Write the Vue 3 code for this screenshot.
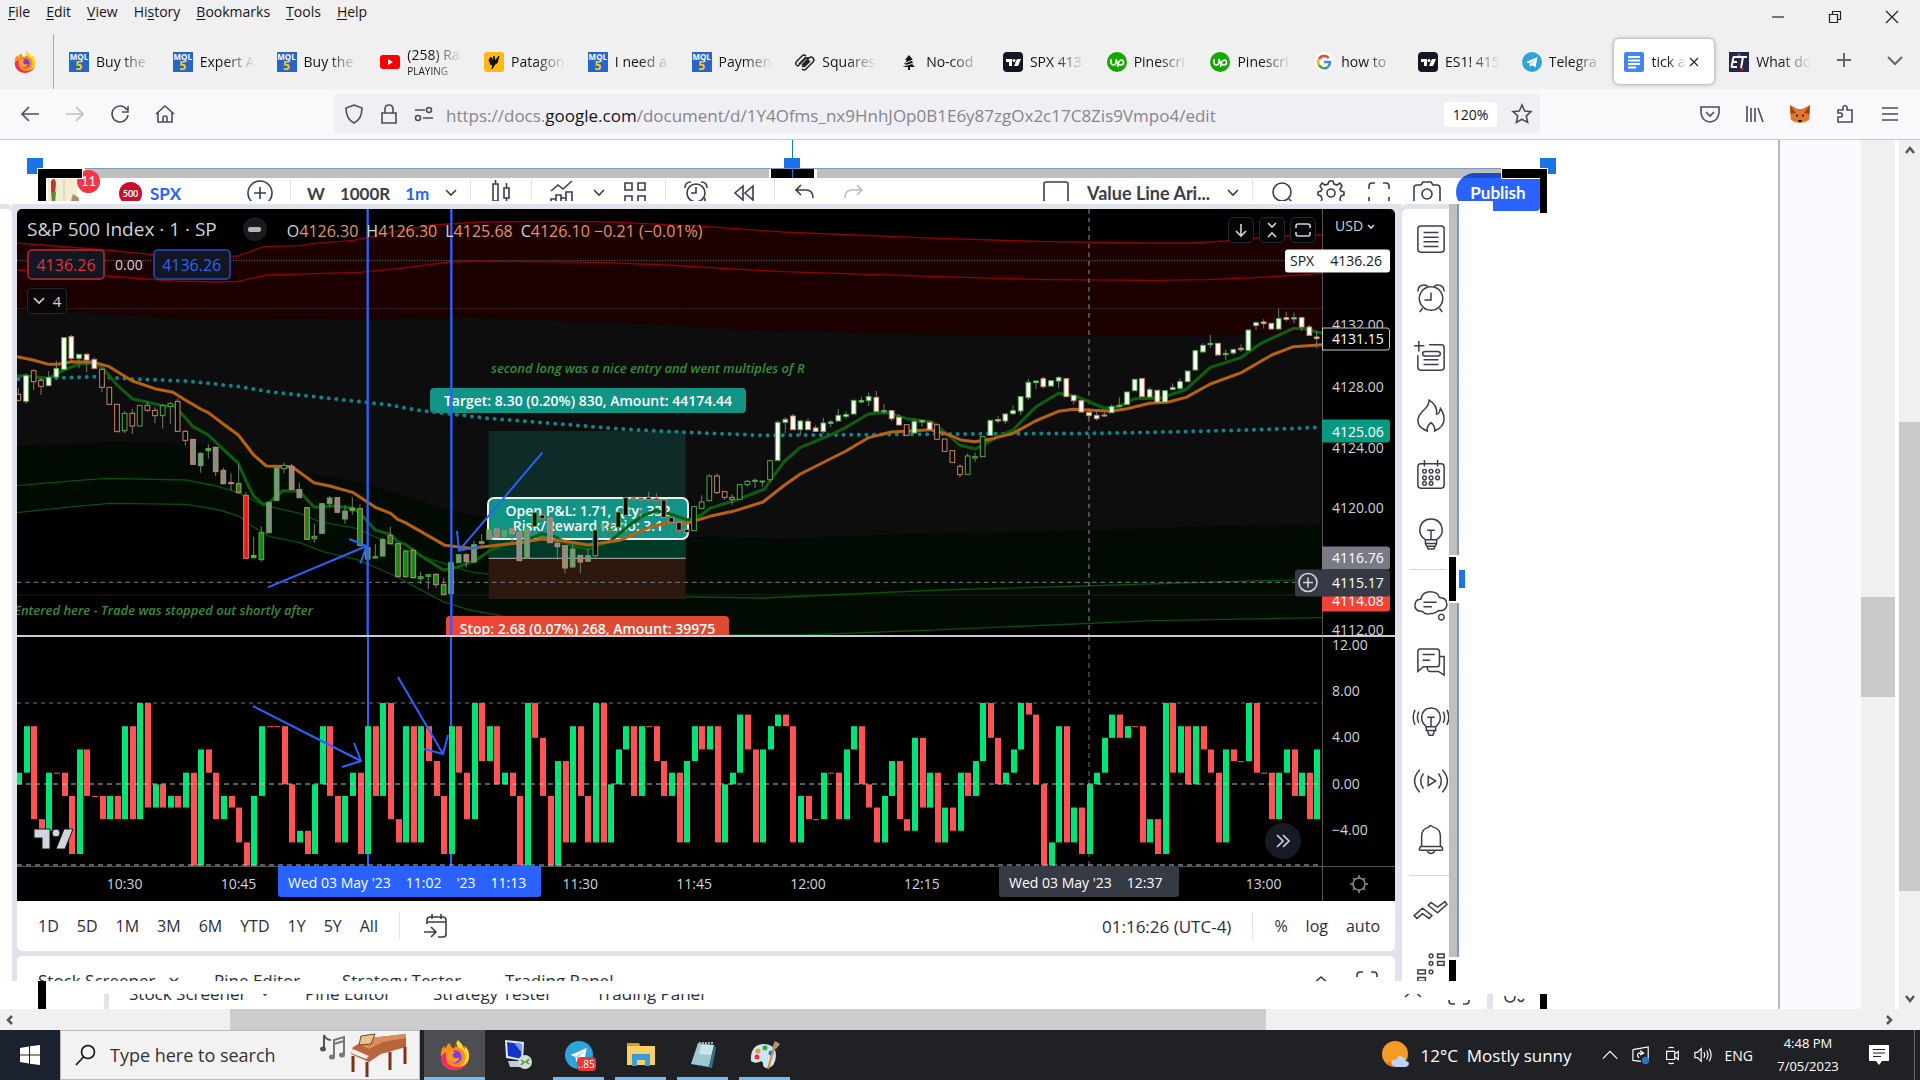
<template>
  <div class="desktop">
    <header class="browser">
      <div class="menu-row">
        <nav class="menu">
          <button v-for="m in menus" :key="m.join('')"><span>{{ m[0] }}<u>{{ m[1] }}</u>{{ m[2] }}</span></button>
        </nav>
        <div class="window-buttons">
          <button aria-label="Minimize"><svg width="12" height="12"><path d="M0 6h12" /></svg></button>
          <button aria-label="Restore"><svg width="12" height="12"><path d="M.5 3.5h8v8h-8zM3.500 3V.5h8v8H9" /></svg></button>
          <button aria-label="Close"><svg width="14" height="12"><path d="M1 0l12 12M13 0L1 12" /></svg></button>
        </div>
      </div>

      <div class="tab-row">
        <div class="firefox-view">
          <svg width="22" height="22" viewBox="0 0 32 32"><use href="#firefox" /></svg>
        </div>
        <div v-for="(tab, i) in tabs" :key="i" class="tab" :class="{ active: tab.active }">
          <span class="favicon" :class="{ mql: tab.kind === 'mql' }">
            <template v-if="tab.kind === 'mql'"><b>MQL</b><i>5</i></template>
            <svg v-else-if="tab.kind === 'youtube'" viewBox="0 0 20 20"><rect y="3" width="20" height="14" rx="3" fill="#f00" /><path d="M8 7l5 3-5 3z" fill="#fff" /></svg>
            <svg v-else-if="tab.kind === 'sbs'" viewBox="0 0 20 20"><rect width="20" height="20" rx="3" fill="#fdb913" /><path d="M5 8l2-3 1 5 2-6 1 5 4-5-2 7-2 1-3 5 1-5-2 1z" fill="#111" stroke="#111" /></svg>
            <svg v-else-if="tab.kind === 'squarespace'" viewBox="0 0 20 20"><path d="M1 10l6-6q2-2 4 0M4 12l7-7M7 17q2 2 4 0l7-7q2-2 0-4t-4 0l-7 7M14 8l-7 7M9 15l6-6M1 10q-1 3 2 4l7-7q2-2 4-1" fill="none" stroke="#222" stroke-width="1.500" /></svg>
            <svg v-else-if="tab.kind === 'tree'" viewBox="0 0 20 20"><path d="M10 3l4 5h-2l3 4h-2l3 3h-5v3H9v-3H4l3-3H5l3-4H6z" fill="#111" /><path d="M6 11l8-3M5 14l10-3" stroke="#eee" /></svg>
            <svg v-else-if="tab.kind === 'tradingview'" viewBox="0 0 20 20"><rect width="20" height="20" rx="4" fill="#131722" /><path d="M3 7h6v7H6v-4H3zM14 7h4l-3 7h-4z" fill="#fff" /><circle cx="11" cy="8.500" r="1.500" fill="#fff" /></svg>
            <svg v-else-if="tab.kind === 'upwork'" viewBox="0 0 20 20"><circle cx="10" cy="10" r="10" fill="#14a800" /><path d="M4 7v3q0 3 2.500 3T9 10V7q1 4 3 5M10.500 15q1-7 4-7 2 0 2 2.500t-2.500 2.500q-2 0-3-1.500" fill="none" stroke="#fff" stroke-width="1.600" /></svg>
            <svg v-else-if="tab.kind === 'google'" viewBox="0 0 20 20"><circle cx="10" cy="10" r="10" fill="#fff" /><path d="M14.700 6A6 6 0 0 0 5 7" fill="none" stroke="#ea4335" stroke-width="2.500" /><path d="M5 7a6 6 0 0 0 0 6" fill="none" stroke="#fbbc05" stroke-width="2.500" /><path d="M5 13a6 6 0 0 0 9 2" fill="none" stroke="#34a853" stroke-width="2.500" /><path d="M10 10h6q0 3-2 5" fill="none" stroke="#4285f4" stroke-width="2.500" /></svg>
            <svg v-else-if="tab.kind === 'telegram'" viewBox="0 0 20 20"><use href="#telegram" /></svg>
            <svg v-else-if="tab.kind === 'docs'" viewBox="0 0 20 20"><rect width="20" height="20" rx="2" fill="#4285f4" /><path d="M4 5h12M4 8.500h12M4 12h12M4 15.500h8" stroke="#fff" stroke-width="2" /></svg>
            <svg v-else viewBox="0 0 20 20"><rect width="20" height="20" fill="#23284a" /><path d="M4 5h6M3 10h5M2 15h6M4.500 5l-2 10M10 5h8M14 5l-2 11" stroke="#fff" stroke-width="2" /><path d="M11 16h4l-2 3z" fill="#d22" /><path d="M8 4h4l-2-3z" fill="#2a7fd0" /></svg>
          </span>
          <span class="tab-title">{{ tab.title }}<small v-if="tab.note">{{ tab.note }}</small></span>
          <button v-if="tab.active" class="tab-close" aria-label="Close tab"><svg width="10" height="10"><path d="M1 1l8 8M9 1L1 9" /></svg></button>
        </div>
        <div class="tab-tools">
          <button aria-label="New tab"><svg width="16" height="16"><path d="M8 1v14M1 8h14" /></svg></button>
          <button aria-label="List all tabs"><svg width="16" height="16"><path d="M1 5l7 7 7-7" /></svg></button>
        </div>
      </div>

      <div class="nav-row">
        <div class="nav-buttons">
          <button aria-label="Back"><svg class="line"><path d="M19 10H2M9 3l-7 7 7 7" /></svg></button>
          <button aria-label="Forward" class="dim"><svg class="line"><path d="M1 10h17M11 3l7 7-7 7" /></svg></button>
          <button aria-label="Reload"><svg class="line"><path d="M17 6a8 8 0 1 0 1 5M18 2v6h-6" /></svg></button>
          <button aria-label="Home"><svg class="line"><path d="M1 10l9-8 9 8M3 8.500V18h14V8.500M8 18v-5q2-2 4 0v5" /></svg></button>
        </div>
        <div class="url-bar">
          <svg class="line"><path d="M10 1l8 3c0 7-2 12-8 15C4 16 2 11 2 4z" /></svg>
          <svg class="line"><path d="M3 9h14v10H3zM6 9V5q0-4 4-4t4 4v4" /></svg>
          <svg class="line"><path d="M1 6h10M9 14h10" /><circle cx="15" cy="6" r="2.500" /><circle cx="4" cy="14" r="2.500" /></svg>
          <div class="address">https://docs.<b>google.com</b>/document/d/1Y4Ofms_nx9HnhJOp0B1E6y87zgOx2c17C8Zis9Vmpo4/edit</div>
          <button class="zoom">120%</button>
          <svg class="line"><path d="M10 1l2.700 6 6.300.6-4.700 4.300 1.300 6.600-5.600-3.300-5.600 3.300 1.300-6.600L1 7.600 7.300 7z" /></svg>
        </div>
        <div class="nav-right">
          <svg class="line"><path d="M1 3h18v6q-1 8-9 9Q2 17 1 9zM6 8l4 4 4-4" /></svg>
          <svg class="line"><path d="M2 2v16M6 4v14M10 4v14M13 4l5 14" /></svg>
          <svg width="20" height="20" viewBox="0 0 20 20"><path d="M0 1l8 4h4l8-4v7l-1 8-4 2-5 1-5-1-4-2-1-8z" fill="#e8752b" /><path d="M0 1l6 8-5 1zM20 1l-6 8 5 1z" fill="#8c4a20" /><path d="M6 10l3 2-3 1zM14 10l-3 2 3 1z" fill="#233447" /><path d="M8 16h4l-1 2H9z" fill="#111" /></svg>
          <svg class="line"><path d="M3 6h5V3q2-3 4 0v3h5v12H3v-5h3q3-2 0-4H3z" /></svg>
          <svg class="line"><path d="M2 4h16M2 10h16M2 16h16" /></svg>
        </div>
      </div>
    </header>

    <main class="viewport">
      <div class="document">
        <div class="shot-top">
          <span class="handle nw"></span>
          <span class="handle n"></span>
          <span class="handle ne"></span>
          <div class="selection-edge"></div>
          <span class="crop nw"></span>
          <span class="crop n"></span>
          <span class="crop ne"></span>
          <div class="tv-toolbar">
            <svg class="avatar" width="34" height="30" viewBox="0 0 34 30"><rect x="2" width="29" height="30" fill="#f3ecd2" /><path d="M5 3q4-5 5 3l-1 9H5z" fill="#c0392b" /><path d="M5 14h5l-1 12H6z" fill="#5c8a3a" /><path d="M18 0v30" stroke="#cfc6a4" /><path d="M24 26l3-10 6 4v8z" fill="#b08a78" /></svg>
            <span class="count">11</span>
            <span class="logo500">500</span>
            <b class="symbol">SPX</b>
            <svg class="ico"><circle cx="14" cy="14" r="12" /><path d="M14 8v12M8 14h12" /></svg>
            <i class="sep"></i>
            <b class="interval">W</b>
            <b class="interval">1000R</b>
            <b class="interval on">1m</b>
            <svg class="chev"><path d="M1 3l5 5 5-5" /></svg>
            <i class="sep"></i>
            <svg class="ico"><path d="M6 5h5v17H6zM8.500 1v4M8.500 22v4M17 9h5v10h-5zM19.500 4v5M19.500 19v6" /></svg>
            <i class="sep"></i>
            <svg class="ico"><path d="M3 12l7-6 5 4 9-8M3 26v-6h5v-4h5v3h5v-6h6v13zM8 20v6M13 19v7M18 19v7" /></svg>
            <svg class="chev"><path d="M1 3l5 5 5-5" /></svg>
            <svg class="ico"><path d="M4 4h7v7H4zM17 4h7v7h-7zM4 17h7v7H4zM17 17h7v7h-7z" /></svg>
            <i class="sep"></i>
            <svg class="ico"><circle cx="14" cy="14" r="9" /><path d="M14 8v6H9M3 9q0-6 6-6M25 9q0-6-6-6M19 23h8M23 19v8" /></svg>
            <svg class="ico"><path d="M13 7l-8 7 8 7zM23 7l-8 7 8 7z" /></svg>
            <i class="sep"></i>
            <svg class="ico"><path d="M10 6l-5 5 5 5M5 11h10q7 0 7 8" /></svg>
            <svg class="ico dim"><path d="M18 6l5 5-5 5M23 11H13q-7 0-7 8" /></svg>
            <span class="grow"></span>
            <svg class="ico"><rect x="2" y="3" width="24" height="24" rx="2" /></svg>
            <b class="layout">Value Line Ari...</b>
            <svg class="chev"><path d="M1 3l5 5 5-5" /></svg>
            <i class="sep"></i>
            <svg class="ico"><circle cx="13" cy="13" r="9" /><path d="M20 20l5 5" /></svg>
            <svg class="ico"><circle cx="14" cy="14" r="4" /><path d="M12 2h4l1 3 3 1 3-2 2 3-2 3 1 2 3 1v3l-3 1-1 3 1 3-3 2-3-2-3 1-1 3M12 2l-1 3-3 1-3-2-2 3 2 3-1 2-3 1v3l3 1 1 3-1 3 3 2 3-2" /></svg>
            <svg class="ico"><path d="M4 10V7q0-3 3-3h3M18 4h3q3 0 3 3v3M4 18v3q0 3 3 3h3M18 24h3q3 0 3-3v-3" /></svg>
            <svg class="ico"><path d="M1 9q0-3 3-3h4l2-3h8l2 3h4q3 0 3 3v16H1z" /><circle cx="14" cy="15" r="5" /></svg>
            <button class="publish">Publish</button>
          </div>
        </div>

        <div class="tv">
          <aside class="left-rail"></aside>

          <section class="center">
            <div class="chart">
              <div class="pane price-pane">
                <svg class="layer" viewBox="52 27 3915 1278" preserveAspectRatio="none">
                  <path :d="redArea" fill="#1c0000" />
                  <path :d="greyArea" fill="#0d0d0d" />
                  <path :d="greenArea" fill="#020b02" />
                  <path d="M52 182H3967" stroke="#777" stroke-width="3" stroke-dasharray="3 5" />
                  <path d="M52 326H3967M52 1185H3967" stroke="#444" stroke-width="3" stroke-dasharray="3 5" />
                  <path :d="line(redUpper)" class="band red" />
                  <path :d="line(redLower)" class="band red" />
                  <path :d="line(greenInner)" class="band green" />
                  <path :d="line(greenOuter)" class="band green" />
                  <rect x="1467" y="693" width="591" height="382" fill="#0f9a8a" opacity=".22" />
                  <rect x="1467" y="1010" width="591" height="65" fill="#00402c" opacity=".8" />
                  <rect x="1467" y="1075" width="591" height="122" fill="#2d180d" />
                  <path d="M1467 1075h591" stroke="#999" stroke-width="4" />
                </svg>
                <div class="tag target">Target: 8.30 (0.20%) 830, Amount: 44174.44</div>
                <div class="tag pnl">Open P&amp;L: 1.71, Qty: 332<br>Risk/Reward Ratio: 3.1</div>
                <div class="tag stop">Stop: 2.68 (0.07%) 268, Amount: 39975</div>
                <svg class="layer" viewBox="52 27 3915 1278" preserveAspectRatio="none">
                  <path d="M52 1147H3967" stroke="#7b7e87" stroke-width="3" stroke-dasharray="14 11" />
                  <path d="M3268 27V1305" stroke="#6e7179" stroke-width="4" stroke-dasharray="14 12" />
                  <path :d="line(mean)" class="mean" />
                  <path :d="line(fast)" class="fast" />
                  <path :d="line(slow)" class="slow" />
                  <g v-for="(c, i) in candles" :key="i">
                    <path :d="`M${c.x} ${c.high}V${c.low}`" stroke="#777" stroke-width="3" />
                    <rect :x="c.x - 7" :y="c.top" width="14" :height="c.height" :fill="c.fill" :stroke="c.edge" stroke-width="3" />
                  </g>
                  <path d="M1104 27V1305M1355 27V1305" class="event" />
                  <path d="M805 1162L1101 1038M1049 1017L1101 1038 1082 1090M1628 758L1378 1052M1372 993L1378 1052 1440 1040" class="arrow" />
                </svg>
                <p class="note first">Entered here - Trade was stopped out shortly after</p>
                <p class="note second">second long was a nice entry and went multiples of R</p>
                <div class="legend">
                  <div class="legend-title"><span>S&amp;P 500 Index · 1 · SP</span><i class="minus"></i>
                    <div class="ohlc">
                      <span>O<b>4126.30</b></span><span>H<b>4126.30</b></span><span>L<b>4125.68</b></span><span>C<b>4126.10 −0.21 (−0.01%)</b></span>
                    </div>
                  </div>
                  <div class="quotes"><button class="sell">4136.26</button><span>0.00</span><button class="buy">4136.26</button></div>
                  <button class="fold"><svg width="12" height="8"><path d="M1 1l5 5 5-5" /></svg>4</button>
                </div>
                <div class="pane-buttons">
                  <button aria-label="Move pane down"><svg width="16" height="16"><path d="M8 2v12M3 9l5 5 5-5" /></svg></button>
                  <button aria-label="Collapse pane"><svg width="16" height="16"><path d="M4 1l4 4 4-4M4 15l4-4 4 4" /></svg></button>
                  <button aria-label="Maximize pane"><svg width="16" height="16"><path d="M1 6V4q0-2 2-2h10q2 0 2 2v2M1 10v2q0 2 2 2h10q2 0 2-2v-2" /></svg></button>
                </div>
              </div>
              <div class="axis price-axis">
                <span class="currency">USD<svg width="8" height="6"><path d="M1 1l3 3 3-3" /></svg></span>
                <span v-for="p in priceTicks" :key="p.text" class="tick" :style="{ top: p.y + '%' }">{{ p.text }}</span>
                <span v-for="p in priceTags" :key="p.text" class="tick boxed" :class="p.kind" :style="{ top: p.y + '%' }">
                  <em v-if="p.kind === 'last'">SPX</em>
                  <svg v-if="p.kind === 'cross'" width="20" height="20"><circle cx="10" cy="10" r="9" /><path d="M10 5v10M5 10h10" /></svg>
                  {{ p.text }}
                </span>
              </div>

              <div class="pane">
                <svg class="layer" viewBox="0 1 1305 229" preserveAspectRatio="none">
                  <path d="M1072 0V231" stroke="#6e7179" stroke-dasharray="5 4" />
                  <path d="M0 67H1305" stroke="#777" stroke-dasharray="4 4" />
                  <path d="M351 0V231M434 0V231" class="event thin" />
                  <rect v-for="(b, i) in bars" :key="i" :x="b.x" :y="b.y" width="6" :height="b.h" :fill="b.color" />
                  <path d="M0 148H1305M0 229H1305" stroke="#bbb" stroke-dasharray="5 4" />
                  <path d="M236 70L344 125M337 107L344 125 325 131M381 41L426 118M431 99L426 118 407 113" class="arrow thin" />
                </svg>
                <svg class="tv-mark" width="42" height="24" viewBox="0 0 42 24"><path d="M2 2h16v20h-8V11H2zM32 2h9l-8 20h-9z" /><circle cx="24" cy="6" r="4" /></svg>
                <button class="to-end" aria-label="Scroll to the last bar"><svg width="16" height="16"><path d="M2 2l6 6-6 6M8 2l6 6-6 6" /></svg></button>
              </div>
              <div class="axis">
                <span v-for="p in oscTicks" :key="p.text" class="tick" :style="{ top: p.y + '%' }">{{ p.text }}</span>
              </div>

              <div class="time-axis">
                <span v-for="t in timeTicks" :key="t.text" class="time" :style="{ left: t.x + '%' }">{{ t.text }}</span>
                <div class="time-tag blue"><span>Wed 03 May '23</span><span>11:02</span><span>'23</span><span>11:13</span></div>
                <div class="time-tag grey"><span>Wed 03 May '23</span><span>12:37</span></div>
              </div>
              <div class="axis-corner">
                <svg width="20" height="20"><circle cx="10" cy="10" r="6" /><path d="M10 1v3M10 16v3M1 10h3M16 10h3M4 4l2 2M14 14l2 2M16 4l-2 2M6 14l-2 2" /></svg>
              </div>
            </div>

            <div class="range-bar">
              <button v-for="r in ranges" :key="r">{{ r }}</button>
              <i class="sep"></i>
              <svg class="ico"><path d="M6 12V8q0-3 3-3h13q3 0 3 3v14q0 3-3 3h-5M6 10h19M11 2v5M20 2v5M3 20h11M10 15l5 5-5 5" /></svg>
              <span class="grow"></span>
              <span class="clock">01:16:26 (UTC-4)</span>
              <i class="sep"></i>
              <button>%</button>
              <button>log</button>
              <button>auto</button>
            </div>

            <div class="bottom-tabs">
              <span class="dropdown">Stock Screener<svg class="chev"><path d="M2 3l4 4 4-4" /></svg></span>
              <span class="pine">Pine Editor</span>
              <span class="strategy">Strategy Tester</span>
              <span>Trading Panel</span>
              <span class="grow"></span>
              <svg class="ico"><path d="M6 15l8-7 8 7" /></svg>
              <svg class="ico"><path d="M4 8V6q0-3 3-3h3M18 3h3q3 0 3 3v2" /></svg>
            </div>
          </section>

          <aside class="right-rail">
            <button v-for="s in railTop" :key="s.name" :aria-label="s.name"><svg class="rail-ico" viewBox="0 0 32 32"><path :d="s.d" /></svg></button>
            <i class="rule"></i>
            <button v-for="s in railMid" :key="s.name" :aria-label="s.name"><svg class="rail-ico" viewBox="0 0 32 32"><path :d="s.d" /></svg></button>
            <i class="rule"></i>
            <button v-for="s in railEnd" :key="s.name" :aria-label="s.name"><svg class="rail-ico" viewBox="0 0 32 32"><path :d="s.d" /></svg></button>
          </aside>
          <div class="right-edge">
            <span class="crop side"></span>
            <span class="handle side"></span>
            <span class="crop foot"></span>
          </div>
        </div>

        <div class="shot-bottom">
          <div class="bottom-tabs ghost">
            <span class="dropdown">Stock Screener<svg class="chev"><path d="M2 3l4 4 4-4" /></svg></span>
            <span class="pine">Pine Editor</span>
            <span class="strategy">Strategy Tester</span>
            <span>Trading Panel</span>
            <span class="grow"></span>
            <svg class="ico"><path d="M6 15l8-7 8 7" /></svg>
            <svg class="ico"><path d="M4 18v1q0 3 3 3h3M18 22h3q3 0 3-3v-1" /></svg>
          </div>
          <div class="ghost-rail"><svg width="24" height="10"><path d="M2 -4q0 6 5 6t5-6M15 -1q3 5 6 0" /></svg></div>
        </div>
      </div>

      <div class="page-gutter"></div>
      <div class="scroll inner"><span></span></div>
      <div class="scroll outer">
        <svg width="12" height="10"><path d="M2 8l4-5 4 5" /></svg>
        <span></span>
        <svg width="12" height="10"><path d="M2 2l4 5 4-5" /></svg>
      </div>
    </main>

    <div class="scroll-x">
      <svg width="10" height="12"><path d="M7 2L3 6l4 4" /></svg>
      <div class="track"><span></span></div>
      <svg width="10" height="12"><path d="M3 2l4 4-4 4" /></svg>
    </div>

    <footer class="taskbar">
      <button class="start" aria-label="Start"><svg width="20" height="20"><path d="M0 3l9-1.500V9.500H0zM10 1.300L20 0v9.500H10zM0 10.500h9v8L0 17zM10 10.500h10V20l-10-1.300z" fill="#fff" /></svg></button>
      <label class="search-box">
        <svg width="22" height="22"><circle cx="13" cy="8" r="6.500" /><path d="M8.500 13L1 21" /></svg>
        <input type="text" placeholder="Type here to search">
        <svg width="92" height="46" viewBox="0 0 92 46">
          <path d="M5 17V3q2 5 7 5" fill="none" stroke="#555" stroke-width="2" /><ellipse cx="4" cy="17" rx="3" ry="2.500" fill="#555" />
          <path d="M15 24V8l10-3v17M15 12l10-3" fill="none" stroke="#777" stroke-width="2" /><ellipse cx="13" cy="25" rx="3" ry="2.500" fill="#777" /><ellipse cx="23" cy="23" rx="3" ry="2.500" fill="#777" />
          <path d="M34 15l16-9 37-4v13L62 22 50 30 32 22z" fill="#b9643c" /><path d="M50 6l37-4v4L64 10 50 17 40 12z" fill="#d98c60" />
          <path d="M34 17l16 7-3 3-15-6z" fill="#eee" /><path d="M42 4l14-2-4 10-12 1z" fill="#e6c48e" stroke="#7b3e20" />
          <path d="M34 24v16M48 30v15M71 20v18M86 15v17" stroke="#7b3216" stroke-width="3" />
        </svg>
      </label>
      <div class="tasks">
        <button class="task focused" aria-label="Firefox"><svg width="30" height="30" viewBox="0 0 32 32"><use href="#firefox" /></svg></button>
        <button class="task" aria-label="Remote Desktop"><svg width="30" height="30"><path d="M3 0l19 2-1 19-17-3z" fill="#dfe7f5" /><path d="M5 2l15 2-1 15-13-3z" fill="#1633c9" /><path d="M12 3l8 1v9z" fill="#6f9bf5" /><path d="M6 21h12v6H8z" fill="#c4cad3" /><circle cx="23" cy="22" r="7" fill="#d9d9d9" /><path d="M19 20l3 2-3 3M27 19l-3 3 3 2" fill="none" stroke="#2a9d3a" stroke-width="1.500" /></svg></button>
        <button class="task running" aria-label="Telegram"><svg width="28" height="28" viewBox="0 0 20 20"><use href="#telegram" /></svg><span class="unread">..85</span></button>
        <button class="task running" aria-label="File Explorer"><svg width="28" height="28"><path d="M0 2h12l2 4H0z" fill="#d99a1c" /><path d="M0 5h28v19H0z" fill="#fbd063" /><path d="M5 25V13h18v12h-5v-6h-8v6z" fill="#3a9be0" /></svg></button>
        <button class="task running" aria-label="Notepad"><svg width="28" height="28"><path d="M9 2l16 2-5 22-18-3z" fill="#9cc9cf" /><path d="M12 4l13 0-3 10-12-1z" fill="#c9e6e8" /><path d="M2 23l18 3 5-22 2 3-4 20z" fill="#3e7078" /><path d="M10 2h14" stroke="#aab" stroke-width="2" stroke-dasharray="2 1" /></svg></button>
        <button class="task running" aria-label="Paint"><svg width="30" height="30"><path d="M13 4q13 0 13 12-1 12-9 12-4 0-4-4t-4-2-8-1Q0 5 13 4z" fill="#cfe4f2" /><circle cx="7" cy="17" r="2.500" fill="#e33" /><circle cx="8" cy="11" r="2.500" fill="#f0962a" /><circle cx="15" cy="8" r="2.500" fill="#3a3" /><circle cx="21" cy="13" r="2.500" fill="#27c" /><path d="M18 29l6-21" stroke="#d78a2e" stroke-width="2" /><path d="M22 8l3-7 5 3-4 5z" fill="#b89468" /></svg></button>
      </div>
      <div class="tray">
        <svg width="30" height="30"><circle cx="14" cy="14" r="13" fill="#f59a22" /><path d="M4 22a13 13 0 0 0 20 0z" fill="#ef7416" /><path d="M13 26q-4-1-2-5 2-2 4-1 2-6 7-3 3 2 2 4 4 0 4 3-1 3-4 3H14z" fill="#b9d4f8" /></svg>
        <span class="weather">12°C&nbsp; Mostly sunny</span>
        <svg class="tray-ico" viewBox="0 0 20 20"><path d="M2 14l8-8 8 8" /></svg>
        <svg class="tray-ico" viewBox="0 0 20 20"><path d="M1 4l17-3v16l-5-1M1 4v12l9 1M13 8H7q-2 3 1 5M9 5l4 3-4 2" /><circle cx="15" cy="16" r="4" fill="#2b72c0" stroke="none" /></svg>
        <svg class="tray-ico" viewBox="0 0 20 20"><path d="M4 6h9v9H4zM13 9l4-3v9l-4-3M6 2q3-1 6 0M6 19q3 1 6 0" /></svg>
        <svg class="tray-ico" viewBox="0 0 20 20"><path d="M1 7h3l4-4v14l-4-4H1zM11 7q2 3 0 6M14 5q3 5 0 10M17 3q4 7 0 14" /></svg>
        <span class="lang">ENG</span>
        <span class="datetime">4:48 PM<br>7/05/2023</span>
        <svg class="notify" width="20" height="20"><path d="M0 0h20v16h-7l-3 4-3-4H0z" fill="#fff" /><path d="M4 4.500h12M4 8h12M4 11.500h8" stroke="#222" /></svg>
        <i class="show-desktop"></i>
      </div>
    </footer>

    <svg class="symbols" width="0" height="0">
      <defs>
        <symbol id="firefox" viewBox="0 0 32 32">
          <path d="M19 0q-3 4-2 7 8 0 11 5 0-4-2-6 6 5 5 13-2 12-15 13Q2 31 1 18 0 10 5 6q0 2 1 3Q8 3 11 4q0 4 4 5 3-4 4-9z" fill="#ff8a1e" />
          <path d="M19 0q-3 5 1 8 7 3 7 10t-7 11q11-2 11-12 0-7-5-11 1 3 0 4-2-6-7-10z" fill="#ffd82e" />
          <path d="M1 18q1 12 15 14 11-1 14-9-5 7-14 6-12-2-9-16-4 1-6 5z" fill="#f5266d" />
          <circle cx="16" cy="18" r="7" fill="#7a3be0" />
          <path d="M7 13q5-3 9 0-4 2-2 5 3 3 7 0-2 7-8 6-7-3-6-11z" fill="#ff9a2a" />
        </symbol>
        <symbol id="telegram" viewBox="0 0 20 20">
          <circle cx="10" cy="10" r="10" fill="#2ea3dc" />
          <path d="M4 10l11.500-5-2 10.500-3.500-2.500-2 2-.5-3.500z" fill="#fff" />
          <path d="M7.500 11.500l6-4.500-4.500 5.500z" fill="#a9d3ea" />
        </symbol>
      </defs>
    </svg>
  </div>
</template>

<script setup>
import { computed } from 'vue'

const menus = [
  ['', 'F', 'ile'], ['', 'E', 'dit'], ['', 'V', 'iew'], ['Hi', 's', 'tory'],
  ['', 'B', 'ookmarks'], ['', 'T', 'ools'], ['', 'H', 'elp']
]

const tabs = [
  { kind: 'mql', title: 'Buy the' },
  { kind: 'mql', title: 'Expert A' },
  { kind: 'mql', title: 'Buy the' },
  { kind: 'youtube', title: '(258) Ra', note: 'PLAYING' },
  { kind: 'sbs', title: 'Patagon' },
  { kind: 'mql', title: 'I need a' },
  { kind: 'mql', title: 'Paymen' },
  { kind: 'squarespace', title: 'Squares' },
  { kind: 'tree', title: 'No-cod' },
  { kind: 'tradingview', title: 'SPX 413' },
  { kind: 'upwork', title: 'Pinescri' },
  { kind: 'upwork', title: 'Pinescri' },
  { kind: 'google', title: 'how to' },
  { kind: 'tradingview', title: 'ES1! 415' },
  { kind: 'telegram', title: 'Telegra' },
  { kind: 'docs', title: 'tick a', active: true },
  { kind: 'et', title: 'What do' }
]

const ranges = ['1D', '5D', '1M', '3M', '6M', 'YTD', '1Y', '5Y', 'All']

const priceTicks = [
  { text: '4132.00', y: 27.2 }, { text: '4128.00', y: 41.7 }, { text: '4124.00', y: 56 },
  { text: '4120.00', y: 70.3 }, { text: '4112.00', y: 98.8 }
]
const priceTags = [
  { text: '4136.26', y: 12.1, kind: 'last' },
  { text: '4131.15', y: 30.4, kind: 'outline' },
  { text: '4125.06', y: 52.2, kind: 'teal' },
  { text: '4116.76', y: 81.9, kind: 'grey' },
  { text: '4114.08', y: 91.8, kind: 'red' },
  { text: '4115.17', y: 87.7, kind: 'cross' }
]
const oscTicks = [
  { text: '12.00', y: 3.5 }, { text: '8.00', y: 23.6 }, { text: '4.00', y: 43.7 },
  { text: '0.00', y: 64.2 }, { text: '−4.00', y: 84.3 }
]

// one bar per minute, the first one is 10:16
const minuteX = (i) => ((4 + 22.78 * i) / 3915) * 100
const timeTicks = [
  ['10:30', 14], ['10:45', 29], ['11:30', 74], ['11:45', 89], ['12:00', 104], ['12:15', 119], ['13:00', 164]
].map(([text, i]) => ({ text, x: minuteX(i) }))

// fill + edge, body top, body bottom, wick top, wick bottom
const candleData = `
ko 583 601 565 605|wg 527 604 520 612|ko 512 545 508 570|ko 541 559 533 585|wg 533 557 513 557|wg 505 531 482 535
wg 413 508|wo 410 475 405 488|wg 463 475 463 505|wo 463 480 460 517|wo 479 505 472 508|ko 508 562 505 577|ko 562 613
ko 613 695|kg 640 692 634 699|ko 640 678 628 702|kg 616 678|ko 616 631 604 636|ko 631 647 622 670|kg 617 647 612 686
kg 611 619 607 672|ko 604 694 595 694|ko 694 721 690 736|so 718 793|sg 760 797 757 818|sg 746 752 733 776
so 742 815 740 828|so 811 851 803 853|so 848 851 820 871|go 851 878 793 881|ro 886 1075 877 1078|lg 1066 1073 1010 1075
gg 998 1079 980 1085|sg 907 998|sg 804 901|kg 796 806 788 820|so 799 868 791 870|so 869 893 848 893|go 923 1018
gg 1009 1016 972 1028|sg 911 1000|sg 894 911 888 921|so 893 937|sg 933 957 915 971|sg 924 932 892 945|go 926 1036 912 1040
go 1043 1077|gg 1070 1074 1032 1076|sg 1018 1068 1013 1070|go 1007 1031 980 1034|go 1031 1130|gg 1053 1130 1050 1134
go 1051 1133 1045 1135|gg 1130 1136 1115 1152|gg 1124 1129 1124 1168|go 1123 1154 1120 1164|go 1154 1184 1134 1184
sg 1088 1181|sg 1064 1088|so 1064 1085 1060 1102|sg 1034 1086 1022 1090|sg 1025 1030 1002 1035|sg 990 1018
so 987 1013|sg 991 1010|so 986 1001 986 1032|so 997 1082|sg 986 1073|kg 937 979|ko 945 956|so 954 1028
so 1030 1040 1025 1079|so 1037 1104 1037 1120|sg 1047 1101 1030 1104|so 1066 1086 1066 1120|sg 1067 1084 1046 1084
kg 990 1067 990 1075|kg 975 978 970 1010|kg 987 991 965 1020|kg 936 982|kg 893 946|ko 892 896 892 920|ko 894 899 894 955
ko 892 899 875 905|ko 895 900 880 910|ko 900 952|ko 952 967 952 995|ko 967 991 967 1015|ko 988 997|kg 920 992
kg 906 925 886 925|kg 828 902 823 902|ko 828 878 820 882|ko 875 892 873 900|ko 892 898 882 915|kg 854 898
kg 844 854 840 860|kg 841 844 835 864|kg 843 846 843 861|kg 782 839 782 844|wg 667 781 661 781|wg 658 667 652 700
wo 648 689 642 689|wg 663 689 660 707|wo 664 689 655 689|wo 684 694 676 694|wg 669 695 653 700|wg 666 670 660 682
wg 646 663 627 663|wg 644 649 634 656|wg 601 642|wg 602 606 590 610|wg 590 602 578 618|wo 592 634 573 634
wg 632 635 613 644|wo 632 656 632 664|wo 652 675 642 675|ko 674 706|wg 665 699 656 699|wg 662 666 658 680|wo 667 688
ko 674 718 670 718|ko 717 754|ko 752 787|ko 799 824 793 832|kg 768 823 760 823|kg 770 774 758 785|kg 710 770
wg 661 706|wo 659 663 648 670|wg 642 663 642 672|wg 632 641 617 645|wg 590 633 590 645|wg 547 593 537 600
wg 543 548 543 567|wo 536 560 530 565|wg 542 558|wg 533 543 528 565|wo 536 590|wo 587 602 587 613|wo 602 636
wo 637 647 637 655|wo 646 656 630 662|wo 645 648 632 650|wg 620 638 613 638|wg 616 620 592 620|wg 576 614|wg 538 572
wo 536 590|wg 569 591 562 591|wo 571 606|wg 572 606|wg 562 569 550 569|wg 545 565 535 570|wg 513 545|wg 452 510
wg 436 456 430 456|wg 430 434 405 444|wo 430 465|wg 460 464 448 480|wg 449 459 445 465|wo 445 449 433 455|wg 390 451
wg 368 377 365 390|wo 366 371 358 385|wo 370 387|wg 356 387 325 387|wo 353 358 335 365|wg 353 357 338 370
wo 353 381 353 392|wo 381 406 375 406|wo 411 416 393 445`

const fills = { w: '#ffffff', k: '#050505', s: '#8a8a8a', g: '#138a13', r: '#f31616', l: '#2bd62b' }
const edges = { g: '#4fae45', o: '#c98a66' }

const candles = computed(() =>
  candleData.trim().split(/[|\n]/).map((row, i) => {
    const [kind, top, bottom, high = top, low = bottom] = row.split(' ')
    return {
      x: Math.round(56 + 22.78 * i),
      top: +top,
      height: Math.max(3, bottom - top),
      high,
      low,
      fill: fills[kind[0]],
      edge: edges[kind[1]]
    }
  })
)

// every bar opens where the one before it closed
const closes = [
  1, 5, -3, -4, 1, 1, -1, -6, 3, -1, -1, -3, -1, -3, 5, -3, 7, -2, 0, -2, -1, -2, 1, -7, 3, 1, -3, -1, -2, -5,
  -7, -1, 5, 5, 5, 0, -5, -4, -6, 0, 5, -1, -5, -1, 1, -6, 5, -1, 7, -3, -5, 5, -5, 5, 2, -1, -6, 5, 1, -3,
  7, 2, 5, 0, 1, -1, -7, 7, 4, -1, -7, 2, -5, 5, -1, -5, 7, -5, 0, 3, 5, -1, 5, 5, 2, -1, 1, -5, 2, 5,
  3, 5, -5, 0, 1, 6, 3, -5, 3, 5, 6, 5, -5, -1, -3, -3, 1, 1, -3, 3, 5, 0, -2, -5, -1, 2, -3, -4, 4, -2,
  1, -5, -2, -4, 1, -1, 2, 7, 4, 0, 1, 3, 7, 6, 0, -7, -5, 5, -5, -2, -6, 0, 1, 4, 6, 4, 5, 5, -5, -3,
  -6, 7, 1, 5, 0, 5, 3, 1, -5, 3, 2, 2, 7, 1, 1, -3, 1, 3, -1, 1, -3, 3
]

const bars = computed(() =>
  closes.map((close, i) => {
    const open = i ? closes[i - 1] : 0
    return {
      x: Math.round(-1 + 7.593 * i),
      y: 148.3 - Math.max(open, close) * 11.62,
      h: Math.max(1, Math.abs(close - open) * 11.62),
      color: close > open ? '#00e676' : '#ff5252'
    }
  })
)

const line = (pts) => 'M' + pts
const area = (top, bottom) => 'M' + top + ' L' + bottom.split(' ').reverse().join(' ') + 'Z'

const redUpper = '52,129 320,150 460,164 660,170 715,168 790,140 900,137 940,130 1060,121 1104,112 1200,92 1300,75 1440,66 1700,64 1840,66 2000,74 2160,82 2350,96 2820,115 3141,125 3463,129 3570,129 3677,123 3838,108 3967,105'
const redLower = '52,210 150,216 320,228 520,243 660,246 715,244 800,225 950,221 1080,217 1200,205 1350,186 1440,183 1800,187 2000,195 2350,215 2820,230 3141,239 3463,241 3623,239 3784,232 3967,220'
const redFloor = '52,330 260,337 430,350 600,357 1100,356 1410,352 1900,370 2300,392 2820,404 3350,407 3677,404 3967,400'
const greenTop = '52,740 200,733 330,727 560,730 650,745 760,770 850,805 980,830 1080,850 1200,885 1330,925 1410,945 1620,975 1910,1008 2370,1017 2850,998 3250,992 3570,982 3967,972'
const greenInner = '52,857 200,844 320,835 560,840 650,858 716,878 790,915 900,940 960,965 1070,985 1180,1035 1300,1080 1410,1115 1630,1145 1800,1175 2010,1190 2290,1194 2820,1170 3250,1158 3677,1145 3967,1138'
const greenOuter = '52,938 200,922 330,910 560,913 660,930 720,950 760,980 810,1010 900,1028 970,1055 1070,1078 1180,1125 1330,1205 1410,1230 1560,1258 1710,1282 1830,1303 2410,1305 2850,1288 3463,1262 3967,1253'
const mean = '56,537 150,535 284,530 398,537 560,543 720,560 800,574 990,595 1100,607 1170,615 1250,630 1354,642 1467,655 1880,688 2060,697 2290,706 2610,704 2850,702 3268,700 3463,697 3741,690 3967,682'
const fast = '52,527 80,528 147,535 193,510 238,492 284,488 310,505 352,555 398,596 444,607 490,617 523,618 545,640 580,680 626,705 671,748 716,790 740,845 762,888 790,913 808,908 850,872 899,873 943,922 1000,918 1059,924 1081,940 1127,990 1173,1003 1194,1025 1217,1033 1260,1065 1331,1110 1377,1100 1430,1080 1470,1052 1513,1035 1580,1020 1627,1001 1665,1010 1710,1035 1764,1048 1830,1025 1890,975 1930,947 1970,932 2010,942 2065,960 2105,945 2130,925 2210,900 2295,867 2320,830 2355,783 2402,742 2490,706 2539,682 2606,642 2660,637 2721,656 2795,665 2850,708 2879,735 2927,747 2959,730 2991,712 3040,690 3107,622 3176,580 3227,588 3313,624 3356,620 3405,596 3484,594 3559,568 3632,502 3725,472 3784,430 3881,385 3918,387 3967,400'
const slow = '52,470 100,480 147,493 175,493 215,485 284,487 329,500 398,543 466,566 520,577 560,602 603,627 626,638 671,672 716,705 762,765 800,798 877,800 943,848 990,858 1059,877 1127,922 1173,940 1194,958 1217,968 1336,1036 1410,1045 1465,1039 1560,1028 1627,1017 1695,1024 1765,1035 1860,1021 1955,980 2010,967 2060,970 2130,949 2200,934 2290,906 2355,855 2402,822 2539,753 2606,713 2675,696 2790,689 2850,705 2884,720 2925,725 2970,718 3040,700 3107,663 3176,634 3222,628 3334,634 3382,626 3450,610 3506,606 3559,592 3632,552 3725,518 3816,465 3881,440 3967,434'

const redArea = area(redUpper, redFloor)
const greyArea = area(redFloor, greenTop)
const greenArea = area(greenTop, greenOuter)

const railTop = [
  { name: 'Watchlist', d: 'M5 2h22q3 0 3 3v22q0 3-3 3H5q-3 0-3-3V5q0-3 3-3zM8 9h16M8 14h16M8 19h16M8 24h16' },
  { name: 'Alerts', d: 'M16 4a12.500 12.500 0 1 0 .1 0M16 10v8H9M2 9q0-7 7-7 3 0 4 3M30 9q0-7-7-7-3 0-4 3M7 27l-3 4M25 27l3 4' },
  { name: 'Object list', d: 'M14 3h13q3 0 3 3v21q0 3-3 3H5q-3 0-3-3V14M-2 4h11M3 -1v11M10 10h13q3 0 3 2.500t-3 2.500H10q-3 0-3-2.500t3-2.500M8 19h16M8 24h16' },
  { name: 'Hotlists', d: 'M14 -1q0 5-4 9Q2 15 2 21q0 7 10 11-1-5 4-9 5 4 4 9 10-4 10-13 0-5-4-11-1 6-4 6 1-10-8-15z' },
  { name: 'Calendar', d: 'M5 4h22q3 0 3 3v20q0 3-3 3H5q-3 0-3-3V7q0-3 3-3zM9 0v7M23 0v7M9 10a2 2 0 1 0 .1 0M16 10a2 2 0 1 0 .1 0M23 10a2 2 0 1 0 .1 0M9 17a2 2 0 1 0 .1 0M16 17a2 2 0 1 0 .1 0M23 17a2 2 0 1 0 .1 0M9 23a2 2 0 1 0 .1 0M16 23a2 2 0 1 0 .1 0' },
  { name: 'Ideas', d: 'M10 22Q4 18 4 12 5 0 16 0t12 12q0 6-6 10zM10 22v4h12v-4M12 29h8M12 12h8M16 12v10M10 26l3 6h6l3-6' }
]
const railMid = [
  { name: 'Minds', d: 'M7 24q-9 0-8-8 1-5 6-5 2-8 10-8t10 6q8 0 8 8-1 7-9 6-4 4-8 3-6 2-9-2zM8 14h14M8 19h9M27 27a3 3 0 1 0 .1 0' },
  { name: 'Chat', d: 'M4 1h18q3 0 3 3v13q0 3-3 3H8l-6 5V4q0-3 2-3zM7 7h13M7 13h8M25 9h5v20l-6-4h-9q-3 0-3-5' },
  { name: 'Ideas stream', d: 'M11 21Q6 17 6 11 7 1 16 1t10 10q0 6-5 10zM11 21v4h10v-4M12 11h8M16 11v10M12 25l2 5h4l2-5M3 5q-3 6 0 12M-1 3q-4 8 0 16M29 5q3 6 0 12M33 3q4 8 0 16' },
  { name: 'Streams', d: 'M13 11l8 5-8 5zM8 8q-6 8 0 16M4 4q-11 12 0 24M24 8q6 8 0 16M28 4q11 12 0 24' },
  { name: 'Notifications', d: 'M6 23V12Q6 4 14 2q0-3 4 0 8 2 8 10v11M5 23h22q3 4 0 4H5q-3 0 0-4zM12 28q4 5 8 0' }
]
const railEnd = [
  { name: 'Trading', d: 'M-2 22l9-8 10 8-3 3-7-5-6 5zM13 11l3-3 7 5 8-6 2 3-10 9z' },
  { name: 'Depth', d: 'M16 0a2 2 0 1 0 .1 0M16 8a2 2 0 1 0 .1 0M16 17a2 2 0 1 0 .1 0M23 0h7v4h-7zM23 8h7v4h-7zM2 17h8v4H2zM2 25h8v4H2z' }
]
</script>

<style>
body {
  margin: 0;
  overflow: hidden;
}
</style>

<style scoped>
.desktop {
  display: flex;
  flex-direction: column;
  height: 100vh;
  overflow: hidden;
  background: #fff;
  font-family: "Open Sans", "Noto Sans", sans-serif;
  font-size: 15px;
  color: #15141a;
}

* {
  box-sizing: border-box;
}

button {
  padding: 0;
  border: 0;
  background: none;
  font: inherit;
  color: inherit;
}

svg {
  flex: none;
  overflow: visible;
}

.symbols {
  position: absolute;
}

.grow {
  flex: 1;
}

/* browser chrome */
.browser {
  flex: none;
  background: #f0f0f0;
  border-bottom: 1px solid #ccc;
}

.menu-row {
  display: flex;
  justify-content: space-between;
  height: 34px;
}

.menu {
  display: flex;
  align-items: center;
  gap: 16px;
  height: 22px;
  padding-left: 8px;
  font-size: 14px;
}

.menu u {
  text-underline-offset: 2px;
}

.window-buttons {
  display: flex;
  align-items: center;
}

.window-buttons button {
  width: 57px;
}

.window-buttons svg,
.tab-tools svg,
.tab-close svg {
  fill: none;
  stroke: #222;
  stroke-width: 1.2;
}

.tab-row {
  display: flex;
  align-items: center;
  height: 55px;
}

.firefox-view {
  display: flex;
  align-items: center;
  flex: none;
  height: 100%;
  width: 54px;
  padding-left: 14px;
  border-right: 1px solid #aaa;
  margin-right: 3px;
}

.tab {
  display: flex;
  align-items: center;
  flex: 1 1 104px;
  min-width: 0;
  height: 45px;
  padding: 0 10px 0 12px;
  gap: 7px;
  overflow: hidden;
}

.tab.active {
  flex-basis: 100px;
  margin: 0 3px 0 1px;
  padding: 0 15px 0 10px;
  background: #fff;
  border-radius: 5px;
  box-shadow: 0 0 4px #888;
}

.favicon {
  display: flex;
  flex-direction: column;
  align-items: center;
  flex: none;
  width: 20px;
  height: 20px;
}

.favicon svg {
  width: 20px;
  height: 20px;
}

.favicon.mql {
  background: #2766c8;
  color: #fff;
  line-height: 9px;
}

.mql b {
  font-size: 8px;
}

.mql i {
  font-style: normal;
  font-weight: bold;
  font-size: 12px;
  line-height: 10px;
  color: #fc0;
}

.tab-title {
  flex: 1;
  min-width: 0;
  overflow: hidden;
  white-space: nowrap;
  font-size: 14px;
  line-height: 18px;
  mask-image: linear-gradient(to right, #000 45%, transparent);
}

.tab-title small {
  display: block;
  font-size: 10px;
  line-height: 14px;
}

.tab-close {
  width: 10px;
  height: 10px;
  margin-left: -5px;
  display: flex;
}

.tab-tools {
  display: flex;
  flex: none;
  justify-content: flex-end;
  gap: 35px;
  width: 99px;
  padding-right: 17px;
}

.tab-tools svg {
  stroke: #666;
  stroke-width: 2;
}

.nav-row {
  display: flex;
  align-items: center;
  height: 50px;
  background: #f9f9fb;
}

.nav-buttons {
  display: flex;
  gap: 25px;
  width: 334px;
  padding-left: 20px;
}

.nav-buttons button {
  display: flex;
}

.line {
  width: 20px;
  height: 20px;
  fill: none;
  stroke: #4d4d57;
  stroke-width: 1.6;
}

.dim {
  opacity: .35;
}

.url-bar {
  display: flex;
  align-items: center;
  flex: 1;
  gap: 15px;
  height: 40px;
  padding: 0 8px 0 10px;
  background: #f0f0f4;
  border-radius: 5px;
}

.address {
  flex: 1;
  margin-left: -3px;
  padding-top: 2px;
  font-size: 17px;
  color: #85858c;
  white-space: nowrap;
}

.address b {
  font-weight: normal;
  color: #15141a;
}

.zoom {
  width: 53px;
  height: 25px;
  background: #fff;
  border-radius: 4px;
  font-size: 14px;
}

.nav-right {
  display: flex;
  justify-content: space-between;
  width: 380px;
  padding: 0 20px 0 160px;
}

/* document area */
.viewport {
  display: flex;
  flex: 1;
  min-height: 0;
}

.document {
  display: flex;
  flex-direction: column;
  flex: 1;
  min-width: 0;
  padding-top: 28px;
  border-right: 2px solid #b8b8b8;
  overflow: hidden;
}

.page-gutter {
  width: 81px;
  background: #f9fafd;
}

.scroll {
  position: relative;
  display: flex;
  flex-direction: column;
  justify-content: space-between;
  align-items: center;
  background: #f0f0f0;
}

.scroll.inner {
  width: 34px;
}

.scroll.outer {
  width: 25px;
  padding: 5px 0;
  border-left: 4px solid #fff;
}

.scroll span {
  position: absolute;
  left: 0;
  right: 0;
  background: #c9c9c9;
}

.scroll.inner span {
  top: 52.6%;
  height: 11.5%;
}

.scroll.outer span {
  top: 32.4%;
  height: 54%;
}

.scroll svg,
.scroll-x svg {
  fill: none;
  stroke: #555;
  stroke-width: 2.5;
}

.scroll-x {
  display: flex;
  align-items: center;
  flex: none;
  height: 21px;
  padding: 0 26px 0 5px;
  background: #f0f0f0;
}

.track {
  flex: 1;
  height: 100%;
  padding: 0 32.7% 0 11.4%;
}

.track span {
  display: block;
  height: 100%;
  background: #cdcdcd;
}

.shot-top {
  position: relative;
  height: 33px;
  margin: 0 231px 0 38px;
}

.selection-edge {
  height: 10px;
  margin-left: 47px;
  margin-right: 45px;
  background: #bfbfbf;
  border-top: 1px solid #8098bd;
}

.handle {
  position: absolute;
  width: 16px;
  height: 16px;
  background: #1a73e8;
}

.handle.nw {
  left: -11px;
  top: -10px;
}

.handle.n {
  left: 746px;
  top: -10px;
  height: 10px;
  z-index: 2;
}

.handle.n::before {
  content: "";
  position: absolute;
  left: 8px;
  top: -18px;
  width: 1px;
  height: 38px;
  background: #1a73e8;
}

.handle.ne {
  right: -9px;
  top: -10px;
}

.crop {
  position: absolute;
  z-index: 1;
  background: #000;
}

.crop.nw {
  left: 0;
  top: 1px;
  width: 44px;
  height: 9px;
  box-shadow: 0 0 0 1px #fff;
}

.crop.nw::after {
  content: "";
  position: absolute;
  left: 0;
  top: 0;
  width: 8px;
  height: 32px;
  background: #000;
}

.crop.n {
  left: 733px;
  top: 1px;
  width: 43px;
  height: 9px;
  box-shadow: -2px 0 #fff, 3px 0 #fff;
}

.crop.ne {
  right: 0;
  top: 1px;
  width: 45px;
  height: 9px;
  box-shadow: 0 0 0 1px #fff;
}

.crop.ne::after {
  content: "";
  position: absolute;
  right: 0;
  top: 0;
  width: 7px;
  height: 44px;
  background: #000;
}

/* charting toolbar, its lower part is covered by the window below */
.tv-toolbar {
  display: flex;
  align-items: center;
  height: 30px;
  margin-right: 7px;
  font-family: Lato, "Open Sans", sans-serif;
  font-size: 17px;
  color: #3a3e4a;
}

.ico {
  width: 28px;
  height: 28px;
  fill: none;
  stroke: #3a3e4a;
  stroke-width: 1.6;
}

.chev {
  width: 12px;
  height: 12px;
  fill: none;
  stroke: #3a3e4a;
  stroke-width: 1.6;
}

.sep {
  width: 1px;
  height: 28px;
  background: #e0e3eb;
}

.avatar {
  margin-left: 8px;
}

.count {
  width: 23px;
  height: 23px;
  margin: -24px 0 0 -3px;
  border-radius: 50%;
  background: #f23645;
  color: #fff;
  font-size: 13px;
  line-height: 23px;
  text-align: center;
}

.logo500 {
  width: 23px;
  height: 23px;
  margin: 0 8px 0 19px;
  border-radius: 50%;
  background: #c8102e;
  color: #fff;
  font-size: 9px;
  font-weight: bold;
  line-height: 23px;
  text-align: center;
}

.symbol,
.interval.on {
  color: #2962ff;
}

.symbol {
  width: 96px;
}

.tv-toolbar .sep {
  margin: 0 16px;
}

.interval {
  margin-right: 15px;
}

.interval.on {
  margin-right: 8px;
}

.layout {
  margin: 0 9px 0 17px;
  font-size: 18px;
}

.tv-toolbar .chev {
  margin: 0 -3px 0 8px;
}

.tv-toolbar .ico + .ico {
  margin-left: 20px;
}

.tv-toolbar .ico + .chev {
  margin-left: 17px;
}

.tv-toolbar .chev + .ico {
  margin-left: 19px;
}

.publish {
  align-self: flex-start;
  width: 84px;
  height: 38px;
  margin: -5px 0 0 15px;
  border-radius: 19px 4px 4px 19px;
  background: linear-gradient(#1f4bc5 5px, #2962ff 5px);
  color: #fff;
  font-weight: bold;
  text-align: center;
}

/* chart window */
.tv {
  position: relative;
  z-index: 2;
  display: flex;
  flex: 1;
  min-height: 0;
  margin-right: 285px;
  padding-right: 34px;
  border-top: 3px solid #fff;
  background: #fff;
  color: #131722;
}

.left-rail {
  width: 12px;
  margin-top: 5px;
  border-radius: 0 5px 0 0;
  background: #fff;
}

.left-rail,
.center,
.right-rail {
  box-shadow: 0 -5px 0 #e0e3eb;
}

.center {
  display: flex;
  flex-direction: column;
  flex: 1;
  min-width: 0;
  margin-top: 5px;
  padding: 0 7px 0 5px;
  background: #e0e3eb;
}

.chart {
  display: grid;
  grid-template: 428fr 229fr 35px / 1fr 73px;
  flex: 1;
  min-height: 0;
  background: #000;
  border-radius: 5px 5px 0 0;
  overflow: hidden;
  font-weight: 500;
  color: #d1d4dc;
}

.pane {
  position: relative;
  overflow: hidden;
}

.price-pane,
.price-axis {
  border-bottom: 2px solid #c9ccd4;
}

.layer {
  position: absolute;
  inset: 0;
  width: 100%;
  height: 100%;
}

.band {
  fill: none;
  stroke-width: 4;
}

.band.red {
  stroke: #8c0404;
}

.band.green {
  stroke: #0a4f0a;
}

.mean,
.fast,
.slow {
  fill: none;
  stroke-linejoin: round;
}

.mean {
  stroke: #0c8790;
  stroke-width: 12;
  stroke-linecap: round;
  stroke-dasharray: 0 22.8;
}

.fast {
  stroke: #0d5f10;
  stroke-width: 9;
}

.slow {
  stroke: #b8620f;
  stroke-width: 9;
}

.event,
.arrow {
  fill: none;
  stroke: #2962ff;
  stroke-width: 7;
}

.arrow {
  stroke-width: 6;
}

.thin {
  stroke-width: 2;
}

.tag {
  position: absolute;
  border-radius: 4px;
  font-size: 14px;
  font-weight: 600;
  line-height: 25px;
  color: #fff;
  white-space: nowrap;
  text-align: center;
}

.tag.target {
  left: 413px;
  top: 179px;
  width: 316px;
  background: #0f9486;
}

.tag.pnl {
  left: 470px;
  top: 288px;
  width: 202px;
  padding: 4px 0 5px;
  border: 2px solid #eee;
  border-radius: 7px;
  line-height: 15px;
  background: #0f9486;
}

.tag.stop {
  left: 429px;
  top: 407px;
  width: 283px;
  background: linear-gradient(to right, #f44336, #dc4a32 50%);
}

.note {
  position: absolute;
  margin: 0;
  font-size: 13px;
  line-height: 18px;
  font-style: italic;
  font-weight: 600;
  color: #3a8a3d;
  white-space: nowrap;
}

.note.first {
  left: -3px;
  top: 392px;
}

.note.second {
  left: 474px;
  top: 150px;
}

.legend {
  position: absolute;
  left: 10px;
  top: 7px;
}

.legend-title {
  display: flex;
  align-items: center;
  height: 26px;
  font-size: 19px;
  white-space: nowrap;
}

.minus {
  display: flex;
  align-items: center;
  justify-content: center;
  width: 24px;
  height: 24px;
  margin: 0 20px 0 26px;
  border-radius: 50%;
  background: #1b1b1d;
}

.minus::before {
  content: "";
  width: 13px;
  height: 5px;
  border-radius: 2px;
  background: #b2b5be;
}

.ohlc {
  display: flex;
  gap: 8px;
  padding-top: 4px;
  font-size: 16px;
}

.ohlc b {
  font-weight: 500;
  color: #e0956a;
}

.quotes {
  display: flex;
  align-items: center;
  gap: 10px;
  margin-top: 7px;
  font-size: 14px;
}

.quotes button {
  width: 78px;
  height: 31px;
  border-radius: 5px;
  border: 2px solid;
  background: #131722;
  font-size: 16px;
}

.quotes .sell {
  border-color: #8f2434;
  color: #e0303f;
}

.quotes .buy {
  border-color: #1f4099;
  color: #2962ff;
}

.fold {
  display: flex;
  align-items: center;
  justify-content: center;
  gap: 8px;
  width: 40px;
  height: 26px;
  margin-top: 8px;
  border: 1px solid #25262b;
  border-radius: 4px;
  background: #0a0506;
}

.fold svg,
.pane-buttons svg,
.currency svg,
.to-end svg,
.axis-corner svg,
.boxed svg {
  fill: none;
  stroke: #d1d4dc;
  stroke-width: 1.6;
}

.pane-buttons {
  position: absolute;
  top: 8px;
  right: 6px;
  display: flex;
  gap: 5px;
}

.pane-buttons button {
  display: flex;
  align-items: center;
  justify-content: center;
  width: 26px;
  height: 26px;
  border: 1px solid #26282f;
  border-radius: 5px;
  background: #060606;
}

.axis {
  position: relative;
  border-left: 1px solid #555;
  font-size: 14px;
}

.price-axis {
  clip-path: inset(0 0 0 -60px);
}

.currency {
  position: absolute;
  left: 12px;
  top: 7px;
}

.currency svg {
  margin-left: 4px;
  vertical-align: middle;
}

.tick {
  position: absolute;
  left: 9px;
  line-height: 22px;
  transform: translateY(-50%);
}

.boxed {
  display: flex;
  align-items: center;
  left: -1px;
  width: 68px;
  height: 23px;
  padding-left: 10px;
  border-radius: 0 3px 3px 0;
  color: #fff;
}

.boxed.last {
  left: -38px;
  width: 105px;
  padding-left: 5px;
  gap: 16px;
  background: #fff;
  border-radius: 3px;
  color: #131722;
}

.boxed em {
  font-style: normal;
}

.boxed.outline {
  border: 1px solid #ccc;
  padding-left: 9px;
  background: #000;
}

.boxed.teal {
  background: #089981;
}

.boxed.grey {
  background: #787b86;
}

.boxed.red {
  background: #f44336;
}

.boxed.cross {
  left: -28px;
  width: 95px;
  height: 27px;
  padding-left: 3px;
  gap: 14px;
  border-radius: 3px;
  background: #363a45;
}

.tv-mark {
  position: absolute;
  left: 15px;
  bottom: 15px;
  fill: #d1d4dc;
  stroke: #131722;
}

.to-end {
  position: absolute;
  right: 21px;
  bottom: 7px;
  display: flex;
  align-items: center;
  justify-content: center;
  width: 36px;
  height: 36px;
  border-radius: 50%;
  background: #161a25;
}

.time-axis,
.axis-corner {
  position: relative;
  border-top: 1px solid #555;
  font-size: 14px;
  line-height: 34px;
}

.axis-corner {
  display: flex;
  align-items: center;
  justify-content: center;
  border-left: 1px solid #555;
}

.axis-corner svg {
  stroke: #888;
}

.time {
  position: absolute;
  transform: translateX(-50%);
}

.time-tag {
  position: absolute;
  top: -1px;
  display: flex;
  gap: 15px;
  height: 31px;
  padding: 0 10px;
  border-radius: 0 0 3px 3px;
  white-space: nowrap;
  color: #fff;
}

.time-tag.blue {
  left: 261px;
  width: 263px;
  background: #2962ff;
}

.time-tag.grey {
  left: 982px;
  width: 180px;
  background: #363a45;
}

.range-bar {
  display: flex;
  align-items: center;
  flex: none;
  height: 50px;
  padding: 0 15px 0 21px;
  gap: 18px;
  border-radius: 0 0 5px 5px;
  background: #fff;
  font-size: 16px;
  font-weight: 500;
  color: #2a2e39;
}

.range-bar .sep {
  margin: 0 3px;
}

.clock {
  font-size: 17px;
}

.bottom-tabs {
  display: flex;
  flex: none;
  height: 25px;
  margin-top: 5px;
  padding: 13px 14px 0 21px;
  border-radius: 5px 5px 0 0;
  background: #fff;
  overflow: hidden;
  font-size: 17px;
  line-height: 24px;
  color: #2a2e39;
}

.dropdown {
  display: flex;
  align-items: center;
  gap: 12px;
  width: 176px;
  height: 24px;
}

.pine {
  width: 128px;
}

.strategy {
  width: 163px;
}

.bottom-tabs .ico + .ico {
  margin-left: 18px;
}

.right-rail {
  display: flex;
  flex-direction: column;
  width: 47px;
  margin-top: 5px;
  border-radius: 5px 0 0 0;
  background: #fff;
  overflow: hidden;
}

.right-rail button {
  display: flex;
  align-items: center;
  justify-content: center;
  flex: none;
  height: 59px;
  padding-left: 10px;
}

.rail-ico {
  width: 30px;
  height: 30px;
  fill: none;
  stroke: #3a3e4a;
  stroke-width: 1.6;
}

.rule {
  flex: none;
  height: 1px;
  margin: 6px 0 4px 7px;
  background: #d5d8e0;
}

.right-edge {
  position: relative;
  width: 10px;
  background: #bfbfbf;
  border-right: 2px solid #8098bd;
}

.crop.side {
  left: 0;
  top: 353px;
  width: 7px;
  height: 44px;
  box-shadow: 0 0 0 2px #fff, 2px 0 0 2px #fff;
}

.handle.side {
  left: 10px;
  top: 366px;
  width: 6px;
  height: 18px;
  z-index: 2;
}

.crop.foot {
  left: 0;
  bottom: 0;
  width: 7px;
  height: 21px;
  box-shadow: 0 0 0 3px #fff;
}

.shot-bottom {
  display: flex;
  flex: none;
  height: 28px;
  margin: 0 231px 0 38px;
  padding-top: 13px;
  background: linear-gradient(#000, #000) left / 8px 100% no-repeat, linear-gradient(#000, #000) right bottom / 7px 15px no-repeat;
  overflow: hidden;
}

.bottom-tabs.ghost {
  flex: 1;
  height: 15px;
  margin: 0 0 0 66px;
  padding: 0 14px 0 20px;
  border-left: 5px solid #e0e3eb;
  border-right: 6px solid #e0e3eb;
  border-radius: 0;
}

.ghost > * {
  margin-top: -12px;
}

.ghost-rail {
  width: 54px;
  padding-left: 10px;
  overflow: hidden;
}

.ghost-rail svg {
  fill: none;
  stroke: #3a3e4a;
  stroke-width: 1.6;
}

/* taskbar */
.taskbar {
  display: flex;
  flex: none;
  height: 50px;
  background: #1f2124;
  color: #fff;
}

.start {
  width: 60px;
  background: #1a2230;
}

.start svg {
  margin-top: 4px;
}

.search-box {
  display: flex;
  align-items: center;
  width: 360px;
  padding: 0 8px 0 14px;
  gap: 13px;
  border: 1px solid #bbb;
  background: #f2f2f2;
}

.search-box > svg:first-child {
  fill: none;
  stroke: #111;
  stroke-width: 1.6;
}

.search-box input {
  flex: 1;
  min-width: 0;
  padding: 0;
  border: 0;
  background: none;
  font: 18px "Open Sans", sans-serif;
}

.search-box input::placeholder {
  color: #333;
}

.tasks {
  display: flex;
  margin-left: 4px;
  gap: 1px;
}

.task {
  position: relative;
  display: flex;
  align-items: center;
  justify-content: center;
  width: 61px;
}

.task.focused {
  background: #4c4e52;
}

.task.focused::after,
.task.running::after {
  content: "";
  position: absolute;
  left: 5px;
  right: 5px;
  bottom: 0;
  height: 3px;
  background: #76b9ed;
}

.task.focused::after {
  left: 0;
  right: 0;
}

.unread {
  position: absolute;
  left: 29px;
  top: 27px;
  padding: 0 1px;
  border-radius: 4px;
  background: #e53935;
  font-size: 10px;
  line-height: 14px;
}

.tray {
  display: flex;
  align-items: center;
  flex: 1;
  justify-content: flex-end;
}

.weather {
  width: 167px;
  margin-left: 10px;
  font-size: 17px;
  white-space: nowrap;
}

.tray-ico {
  width: 18px;
  height: 18px;
  margin-left: 13px;
  fill: none;
  stroke: #fff;
  stroke-width: 1.3;
}

.lang {
  margin-left: 13px;
  font-size: 14px;
}

.datetime {
  width: 110px;
  font-size: 13px;
  line-height: 23px;
  text-align: center;
}

.notify {
  margin: 0 25px 0 6px;
}

.show-desktop {
  width: 6px;
  height: 100%;
  border-left: 1px solid #666;
}
</style>
